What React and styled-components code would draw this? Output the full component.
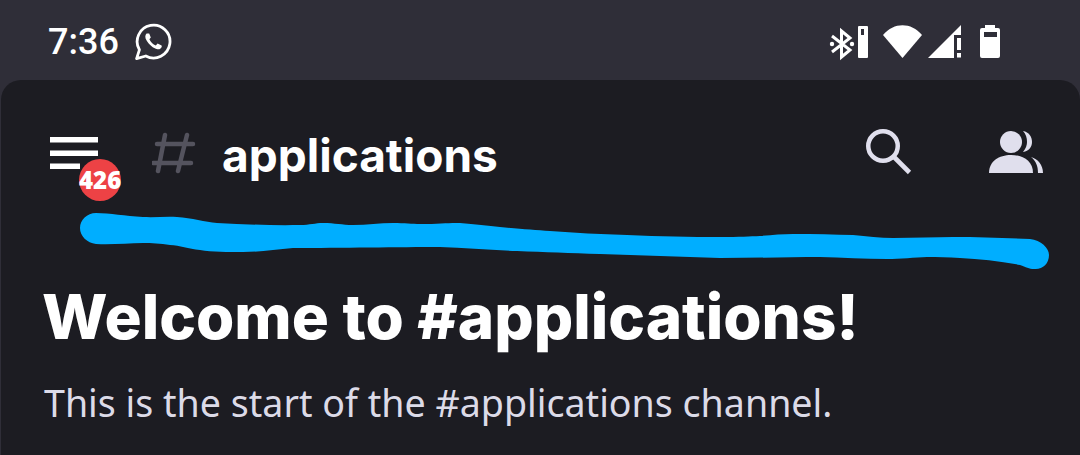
import React from "react";
import styled, { createGlobalStyle } from "styled-components";

const Global = createGlobalStyle`
  html, body { margin: 0; padding: 0; background: #2f2e38; }
  #root { width: 1080px; height: 455px; overflow: hidden; }
`;

const Screen = styled.div`
  position: relative;
  width: 1080px;
  height: 455px;
  background: #2f2e38;
  overflow: hidden;
  display: flex;
  flex-direction: column;
`;

const StatusBar = styled.header`
  height: 80px;
  flex: none;
  display: flex;
  align-items: center;
  justify-content: space-between;
  padding: 0 71px 0 48px;
  box-sizing: border-box;
`;

const StatusLeft = styled.div`
  display: flex;
  align-items: center;
  gap: 15px;
  margin-top: 3px;
`;

const Clock = styled.span`
  font: 500 36px "Roboto", "Inter", sans-serif;
  color: #fff;
  line-height: 40px;
`;

const StatusRight = styled.div`
  display: flex;
  align-items: center;
  margin-top: 2px;
`;

const Panel = styled.main`
  flex: 1;
  margin-left: 1px;
  background: #1c1c22;
  border-radius: 20px 20px 0 0;
  display: flex;
  flex-direction: column;
  padding: 0 36px 0 44px;
`;

const Toolbar = styled.div`
  height: 200px;
  flex: none;
  display: flex;
  align-items: flex-start;
  padding-top: 47px;
  box-sizing: border-box;
`;

const Menu = styled.div`
  position: relative;
  width: 50px;
  height: 50px;
  margin-left: 5px;
  flex: none;
`;

const Badge = styled.span`
  position: absolute;
  left: 29px;
  top: 32px;
  width: 42px;
  height: 42px;
  border-radius: 50%;
  background: #ed4245;
  color: #fff;
  font: 800 24px/42px "Open Sans", sans-serif;
  text-align: center;
`;

const HashMark = styled.svg`
  flex: none;
  margin-left: 52px;
`;

const ChannelTitle = styled.h1`
  margin: 0 0 0 24px;
  font: 700 46px/56px "Inter", sans-serif;
  color: #fff;
`;

const ToolbarActions = styled.div`
  margin-left: auto;
  display: flex;
  gap: 77px;
  align-items: center;
  margin-top: 2px;
  margin-right: 1px;
`;

const Welcome = styled.h2`
  margin: 0 0 0 -3px;
  font: 800 61.9px/74px "Inter", sans-serif;
  color: #fff;
`;

const Intro = styled.p`
  margin: 25px 0 0 -1px;
  font: 400 37.6px/48px "Noto Sans", sans-serif;
  color: #dcdbe8;
`;

const Scribble = styled.svg`
  position: absolute;
  left: 0;
  top: 0;
  pointer-events: none;
`;

const Whatsapp = () => (
  <svg width="38" height="38" viewBox="0 0 38 38">
    <path d="M2.6 35.6 L5.4 26.8 A16.4 16.4 0 1 1 11.8 33 Z" fill="none" stroke="#fff" strokeWidth="2.8" strokeLinejoin="round" />
    <path d="M12.6 10.4 C11 12 10.8 14.4 12.6 17.6 C15 21.8 19.2 25.4 23.4 26.2 C25.6 26.6 27.2 25.4 27.8 23.4 L27.6 22.4 L23.6 20.4 L21.8 22.4 C19 21.4 16.6 18.8 15.4 16.2 L16.8 14.4 L15.2 10.4 Z" fill="#fff" />
  </svg>
);

const StatusIcons = () => (
  <svg width="180" height="40" viewBox="0 0 180 40">
    <path d="M3 15 L21 29 L12.500 36 L12.500 10 L21 17 L3 31" stroke="#fff" strokeWidth="3" fill="none" />
    <circle cx="3" cy="23" r="2.2" fill="#fff" />
    <circle cx="23" cy="23" r="2.2" fill="#fff" />
    <path fillRule="evenodd" fill="#fff" d="M29 6 a1 1 0 0 1 1 -1 h8 a1 1 0 0 1 1 1 v30 a1 1 0 0 1 -1 1 h-8 a1 1 0 0 1 -1 -1 Z M32 8 v6 h3 v-6 Z" />
    <path fill="#fff" d="M54 14 C65 1 82 1 93 14 L73.500 37 Z" />
    <path fill="#fff" d="M99 37 L132 4 V14 H125 V37 Z" />
    <path fill="#fff" d="M128 17 H132 V29 H128 Z M128 32 H132 V36.500 H128 Z" />
    <path fillRule="evenodd" fill="#fff" d="M156 4 h10 v3 h3 a2 2 0 0 1 2 2 v26 a2 2 0 0 1 -2 2 h-16 a2 2 0 0 1 -2 -2 v-26 a2 2 0 0 1 2 -2 h3 Z M155 11 v5 h13 v-5 Z" />
  </svg>
);

const MenuIcon = () => (
  <svg width="50" height="50" viewBox="0 0 50 50">
    <path d="M0 10 H48 V15.500 H0 Z M0 23.500 H48 V29 H0 Z M0 36.500 H30 V42 H0 Z" fill="#fff" />
  </svg>
);

const HashIcon = () => (
  <HashMark width="46" height="50" viewBox="0 0 46 50">
    <path d="M13 8 L6 44 M35 8 L26 44 M5 17 H41 M1 36 H39" stroke="#54535e" strokeWidth="4.500" strokeLinecap="round" />
  </HashMark>
);

const SearchIcon = () => (
  <svg width="46" height="46" viewBox="0 0 46 46">
    <circle cx="17" cy="17" r="14.750" fill="none" stroke="#e0dfed" strokeWidth="4.500" />
    <path d="M27 27 L43.500 43.500" stroke="#e0dfed" strokeWidth="4.600" />
  </svg>
);

const PeopleIcon = () => (
  <svg width="54" height="42" viewBox="0 0 54 42">
    <circle cx="22" cy="11" r="11" fill="#e0dfed" />
    <path d="M0 42 C0 30 10 24 22 24 C34 24 44 30 44 42 Z" fill="#e0dfed" />
    <path d="M34 0 C40 1 43 6 43 11 C43 16 40 20 34 21 C37 17 38 14 38 11 C38 7 37 3 34 0 Z" fill="#e0dfed" />
    <path d="M42 26 C49 28 54 34 54 42 H49 C49 35 47 30 42 26 Z" fill="#e0dfed" />
  </svg>
);

const Stroke = () => (
  <Scribble width="1080" height="455" viewBox="0 0 1080 455">
    <path
      fill="#00aeff"
      d="M96 213 C110 213 125 216 143 217 C155 217.500 165 216.500 177 217 C192 218 205 222 217 223 C245 224.500 272 225.500 300 225 C310 225 315 223 323 223 C335 223 342 225 353 225 C367 225 380 223 393 223 C405 223 412 224 420 224 C440 224 450 222.500 460 223 C475 224 488 226 500 227 C520 229 535 230 550 231 C575 233 600 234 627 235 C660 236.500 690 237 720 237 C740 237 750 236.500 760 236 C772 235 782 234 793 234 C815 234 835 234.500 853 235 C867 236 880 238 893 238 C915 238 935 237 953 237 C980 237 1005 238 1030 239 C1041 240 1049 248 1049 255 C1049 264 1042 270 1034 269 C1029 269 1026 267 1020 265 C1000 261 980 259 960 258 C948 257 938 257 927 257 C915 257.500 900 259 887 259 C865 259 842 257.500 820 257 C790 257 755 258 720 258 C680 257 640 255 600 254 C570 253 545 252 517 251 C490 250 465 248 440 247 C400 247 340 248 293 248 C275 249.500 260 252 243 252 C228 252 212 252 200 250 C188 248.500 180 245.500 170 245 C160 243.500 152 243 143 243 C128 243 112 245 96 244 C87 243 80 236 80 228 C80 220 87 213 96 213 Z"
    />
  </Scribble>
);

export default function App() {
  return (
    <Screen>
      <Global />
      <StatusBar>
        <StatusLeft>
          <Clock>7:36</Clock>
          <Whatsapp />
        </StatusLeft>
        <StatusRight>
          <StatusIcons />
        </StatusRight>
      </StatusBar>
      <Panel>
        <Toolbar>
          <Menu>
            <MenuIcon />
            <Badge>426</Badge>
          </Menu>
          <HashIcon />
          <ChannelTitle>applications</ChannelTitle>
          <ToolbarActions>
            <SearchIcon />
            <PeopleIcon />
          </ToolbarActions>
        </Toolbar>
        <Welcome>Welcome to #applications!</Welcome>
        <Intro>This is the start of the #applications channel.</Intro>
      </Panel>
      <Stroke />
    </Screen>
  );
}
